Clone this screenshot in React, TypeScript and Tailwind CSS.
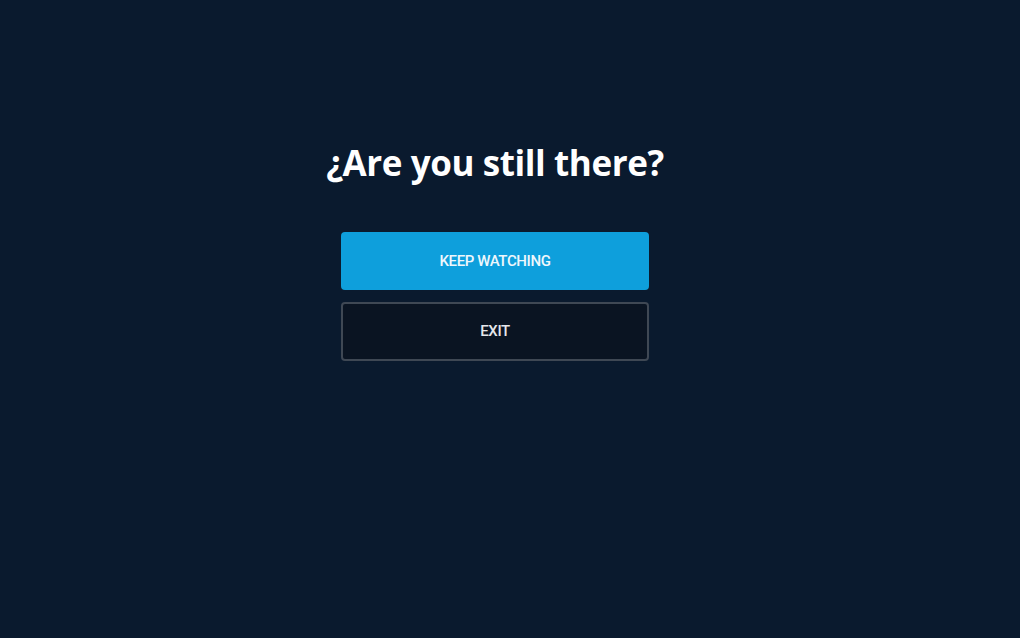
export default function App() {
  return (
    <div className="w-full h-[638px] bg-[#0a1a2e] flex flex-col items-center pt-[140px] pr-[30px] font-['Open_Sans',sans-serif]">
      <h1 className="text-[35px] leading-[46px] font-bold text-white tracking-[-0.4px]">
        ¿Are you still there?
      </h1>
      <div className="mt-[46px] w-[308px] flex flex-col gap-[12px]">
        <button className="h-[58px] rounded-[4px] bg-[#0e9fdc] text-[#eef7fc] text-[15px] font-medium tracking-[-0.4px] font-['Roboto',sans-serif]">
          KEEP WATCHING
        </button>
        <button className="h-[59px] rounded-[4px] bg-[#0a1422] border-2 border-[#3f4854] text-[#e5e7eb] text-[15px] font-medium tracking-[-0.4px] font-['Roboto',sans-serif]">
          EXIT
        </button>
      </div>
    </div>
  );
}
